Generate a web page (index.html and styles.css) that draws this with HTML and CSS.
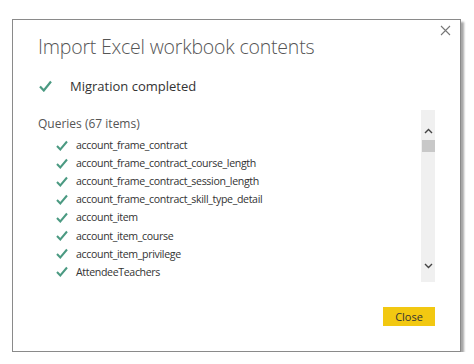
FILE: index.html
```html
<!DOCTYPE html>
<html lang="en">
<head>
    <meta charset="UTF-8">
    <title>Import Excel workbook contents</title>
    <link rel="stylesheet" href="styles.css">
</head>
<body>
    <div class="dialog">
        <button class="close-x" aria-label="Close">
            <svg width="11" height="11" viewBox="0 0 11 11"><path d="M1 1L10 10M10 1L1 10" stroke="#777" stroke-width="1.1" fill="none"/></svg>
        </button>
        <h1 class="title">Import Excel workbook contents</h1>
        <div class="status">
            <svg class="check big" width="13" height="12" viewBox="0 0 13 12"><path d="M1 6.5L4.8 10.5L12 1.5" stroke="#4b9a82" stroke-width="2.2" fill="none"/></svg>
            <span>Migration completed</span>
        </div>
        <div class="queries">
            <div class="list">
                <div class="list-head">Queries (67 items)</div>
                <ul class="items">
                    <li><svg class="check" width="12" height="11" viewBox="0 0 12 11"><path d="M1 6L4.3 9.5L11 1.5" stroke="#4b9a82" stroke-width="2" fill="none"/></svg>account_frame_contract</li>
                    <li><svg class="check" width="12" height="11" viewBox="0 0 12 11"><path d="M1 6L4.3 9.5L11 1.5" stroke="#4b9a82" stroke-width="2" fill="none"/></svg>account_frame_contract_course_length</li>
                    <li><svg class="check" width="12" height="11" viewBox="0 0 12 11"><path d="M1 6L4.3 9.5L11 1.5" stroke="#4b9a82" stroke-width="2" fill="none"/></svg>account_frame_contract_session_length</li>
                    <li><svg class="check" width="12" height="11" viewBox="0 0 12 11"><path d="M1 6L4.3 9.5L11 1.5" stroke="#4b9a82" stroke-width="2" fill="none"/></svg>account_frame_contract_skill_type_detail</li>
                    <li><svg class="check" width="12" height="11" viewBox="0 0 12 11"><path d="M1 6L4.3 9.5L11 1.5" stroke="#4b9a82" stroke-width="2" fill="none"/></svg>account_item</li>
                    <li><svg class="check" width="12" height="11" viewBox="0 0 12 11"><path d="M1 6L4.3 9.5L11 1.5" stroke="#4b9a82" stroke-width="2" fill="none"/></svg>account_item_course</li>
                    <li><svg class="check" width="12" height="11" viewBox="0 0 12 11"><path d="M1 6L4.3 9.5L11 1.5" stroke="#4b9a82" stroke-width="2" fill="none"/></svg>account_item_privilege</li>
                    <li><svg class="check" width="12" height="11" viewBox="0 0 12 11"><path d="M1 6L4.3 9.5L11 1.5" stroke="#4b9a82" stroke-width="2" fill="none"/></svg>AttendeeTeachers</li>
                </ul>
            </div>
            <div class="scrollbar">
                <svg width="9" height="6" viewBox="0 0 9 6"><path d="M1 5L4.5 1.5L8 5" stroke="#444" stroke-width="1.4" fill="none"/></svg>
                <div class="thumb"></div>
                <div class="track"></div>
                <svg width="9" height="6" viewBox="0 0 9 6"><path d="M1 1L4.5 4.5L8 1" stroke="#444" stroke-width="1.4" fill="none"/></svg>
            </div>
        </div>
        <div class="actions">
            <button class="btn-close">Close</button>
        </div>
    </div>
</body>
</html>
```

FILE: styles.css
```css
body {
    margin: 0;
    padding: 19px 0 0 12px;
    background: #fff;
    font-family: "Open Sans", "Noto Sans", Arial, sans-serif;
    color: #333;
}

.dialog {
    position: relative;
    box-sizing: border-box;
    width: 449px;
    height: 333px;
    border: 1px solid #8a8a8a;
    background: #fff;
    box-shadow: 3px 3px 2px rgba(0, 0, 0, 0.35);
    padding: 12px 25px 0 25px;
}

.close-x {
    position: absolute;
    top: 5px;
    right: 9px;
    border: none;
    background: none;
    padding: 0;
    line-height: 0;
}

.title {
    margin: 0;
    font-size: 19.5px;
    font-weight: 300;
    color: #555;
    line-height: 30px;
    letter-spacing: -0.2px;
}

.status {
    display: flex;
    align-items: center;
    margin-top: 14px;
    height: 20px;
    font-size: 13px;
    color: #333;
}

.status .check {
    margin: 0 18px 0 1px;
}

.queries {
    display: flex;
    margin-top: 14px;
    height: 172px;
}

.list {
    flex: 1;
}

.list-head {
    font-size: 12px;
    color: #555;
    margin-top: 6px;
    line-height: 16px;
}

.items {
    list-style: none;
    margin: 4px 0 0 0;
    padding: 0 0 0 18px;
}

.items li {
    display: flex;
    align-items: center;
    height: 18.1px;
    font-size: 10.6px;
    letter-spacing: -0.35px;
    color: #333;
}

.items .check {
    margin-right: 8px;
}

.scrollbar {
    width: 14px;
    background: #f0f0f0;
    display: flex;
    flex-direction: column;
    align-items: center;
    padding: 18px 0 13px 0;
    box-sizing: border-box;
}

.thumb {
    width: 13px;
    height: 12px;
    background: #c8c8c8;
    margin-top: 6px;
}

.track {
    flex: 1;
}

.actions {
    display: flex;
    justify-content: flex-end;
    margin-top: 25px;
}

.btn-close {
    width: 52px;
    height: 19px;
    border: none;
    background: #f2c811;
    font-family: "Open Sans", Arial, sans-serif;
    font-size: 11px;
    color: #333;
    padding: 0;
}
```
